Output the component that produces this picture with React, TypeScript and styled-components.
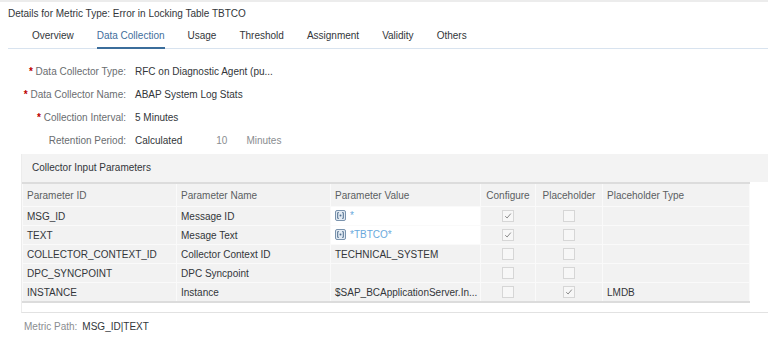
import React from 'react'
import styled, { createGlobalStyle } from 'styled-components'

const GlobalStyle = createGlobalStyle`
  body {
    margin: 0;
    background: #ffffff;
    font-family: 'Liberation Sans', Arial, sans-serif;
    color: #32363a;
  }
`

type Param = {
  id: string
  name: string
  value: string
  variable?: boolean
  configure: boolean
  placeholder: boolean
  type: string
}

const params: Param[] = [
  { id: 'MSG_ID', name: 'Message ID', value: '*', variable: true, configure: true, placeholder: false, type: '' },
  { id: 'TEXT', name: 'Mesage Text', value: '*TBTCO*', variable: true, configure: true, placeholder: false, type: '' },
  { id: 'COLLECTOR_CONTEXT_ID', name: 'Collector Context ID', value: 'TECHNICAL_SYSTEM', configure: false, placeholder: false, type: '' },
  { id: 'DPC_SYNCPOINT', name: 'DPC Syncpoint', value: '', configure: false, placeholder: false, type: '' },
  { id: 'INSTANCE', name: 'Instance', value: '$SAP_BCApplicationServer.In...', configure: false, placeholder: true, type: 'LMDB' },
]

const tabs = ['Overview', 'Data Collection', 'Usage', 'Threshold', 'Assignment', 'Validity', 'Others']

const VariableIcon = () => (
  <svg width="11" height="11" viewBox="0 0 11 11">
    <rect x="0.5" y="0.5" width="10" height="10" rx="1.5" fill="#e3ebf3" stroke="#7a93ad" />
    <path d="M3.8 2.6H2.7V8.4H3.8M7.2 2.6H8.3V8.4H7.2" fill="none" stroke="#51708f" strokeWidth="1" />
    <circle cx="5.5" cy="5.5" r="1" fill="#51708f" />
  </svg>
)

const Check = ({ checked }: { checked: boolean }) => (
  <CheckBox>
    {checked && (
      <svg width="8" height="8" viewBox="0 0 8 8">
        <path d="M1.2 4.2L3.1 6L6.8 1.6" fill="none" stroke="#8c8c8c" strokeWidth="1" />
      </svg>
    )}
  </CheckBox>
)

const App: React.FC = () => {
  return (
    <>
      <GlobalStyle />
      <Page>
        <Title>Details for Metric Type: Error in Locking Table TBTCO</Title>
        <TabBar>
          {tabs.map((t) => (
            <Tab key={t} active={t === 'Data Collection'}>
              {t}
            </Tab>
          ))}
        </TabBar>

        <Form>
          <Label required>Data Collector Type:</Label>
          <Value>RFC on Diagnostic Agent (pu...</Value>
          <Label required>Data Collector Name:</Label>
          <Value>ABAP System Log Stats</Value>
          <Label required>Collection Interval:</Label>
          <Value>5 Minutes</Value>
          <Label>Retention Period:</Label>
          <Value>
            Calculated
            <Muted style={{ marginLeft: 34 }}>10</Muted>
            <Muted style={{ marginLeft: 19 }}>Minutes</Muted>
          </Value>
        </Form>

        <Panel>
          <PanelHeader>Collector Input Parameters</PanelHeader>
          <Table>
            <colgroup>
              <col style={{ width: 154 }} />
              <col style={{ width: 154 }} />
              <col style={{ width: 150 }} />
              <col style={{ width: 55 }} />
              <col style={{ width: 67 }} />
              <col style={{ width: 147 }} />
            </colgroup>
            <thead>
              <tr>
                <Th>Parameter ID</Th>
                <Th>Parameter Name</Th>
                <Th>Parameter Value</Th>
                <Th center>Configure</Th>
                <Th center>Placeholder</Th>
                <Th>Placeholder Type</Th>
              </tr>
            </thead>
            <tbody>
              {params.map((p) => (
                <tr key={p.id}>
                  <Td>{p.id}</Td>
                  <Td>{p.name}</Td>
                  <ValueCell editable={!!p.variable}>
                    {p.variable ? (
                      <VarValue>
                        <VariableIcon />
                        <span>{p.value}</span>
                      </VarValue>
                    ) : (
                      p.value
                    )}
                  </ValueCell>
                  <Td center>
                    <Check checked={p.configure} />
                  </Td>
                  <Td center>
                    <Check checked={p.placeholder} />
                  </Td>
                  <Td>{p.type}</Td>
                </tr>
              ))}
            </tbody>
          </Table>
          <PanelFooter />
        </Panel>

        <MetricPath>
          <Muted>Metric Path:</Muted>
          <span>MSG_ID|TEXT</span>
        </MetricPath>
      </Page>
    </>
  )
}

export default App

const Page = styled.div`
  width: 768px;
  height: 340px;
  overflow: hidden;
  border-top: 2px solid #ececec;
  box-sizing: border-box;
  font-size: 10px;
`

const Title = styled.div`
  height: 24px;
  line-height: 24px;
  padding-left: 8px;
  color: #32363a;
`

const TabBar = styled.div`
  display: flex;
  margin-left: 8px;
  padding-left: 24px;
  gap: 23px;
  border-bottom: 1px solid #d8e3ef;
`

const Tab = styled.div<{ active?: boolean }>`
  height: 21px;
  line-height: 19px;
  color: ${(p) => (p.active ? '#3e6e9c' : '#32363a')};
  border-bottom: 2px solid ${(p) => (p.active ? '#3b6d9b' : 'transparent')};
  margin-bottom: -1px;
`

const Form = styled.div`
  display: grid;
  grid-template-columns: 126px 1fr;
  column-gap: 9px;
  grid-auto-rows: 23px;
  align-items: center;
  padding-top: 11px;
`

const Label = styled.div<{ required?: boolean }>`
  text-align: right;
  color: #6a6d70;

  &::before {
    content: ${(p) => (p.required ? "'* '" : "''")};
    color: #bb0000;
    font-weight: bold;
  }
`

const Value = styled.div`
  color: #32363a;
`

const Muted = styled.span`
  color: #8a8d90;
`

const Panel = styled.div`
  margin-top: 2px;
  margin-left: 21px;
  border-left: 1px solid #ececec;
  border-bottom: 1px solid #e2e2e2;
`

const PanelHeader = styled.div`
  height: 28px;
  line-height: 28px;
  padding-left: 10px;
  background: #f3f3f3;
  color: #32363a;
`

const Table = styled.table`
  width: 727px;
  table-layout: fixed;
  border-collapse: collapse;
  border-top: 2px solid #dcdcdc;
  border-bottom: 2px solid #dcdcdc;
  border-right: 1px solid #ececec;
`

const Th = styled.th<{ center?: boolean }>`
  height: 22px;
  padding: 0 4px;
  background: #f2f2f2;
  border: 1px solid #fafafa;
  border-top: none;
  font-weight: normal;
  color: #5b5e61;
  text-align: ${(p) => (p.center ? 'center' : 'left')};
  white-space: nowrap;
  overflow: hidden;
`

const Td = styled.td<{ center?: boolean }>`
  height: 18px;
  padding: 0 4px;
  background: #f2f2f2;
  border: 1px solid #fafafa;
  color: #32363a;
  text-align: ${(p) => (p.center ? 'center' : 'left')};
  white-space: nowrap;
  overflow: hidden;
`

const ValueCell = styled(Td)<{ editable?: boolean }>`
  background: ${(p) => (p.editable ? '#ffffff' : '#f2f2f2')};
`

const VarValue = styled.span`
  display: inline-flex;
  align-items: center;
  gap: 4px;
  color: #6aa9dc;

  svg {
    flex: none;
  }
`

const CheckBox = styled.span`
  display: inline-flex;
  align-items: center;
  justify-content: center;
  width: 12px;
  height: 12px;
  box-sizing: border-box;
  border: 1px solid #d6d6d6;
  background: #f7f7f7;
  vertical-align: middle;
`

const PanelFooter = styled.div`
  height: 9px;
  background: #ffffff;
`

const MetricPath = styled.div`
  display: flex;
  gap: 5px;
  padding: 8px 0 0 24px;
`
